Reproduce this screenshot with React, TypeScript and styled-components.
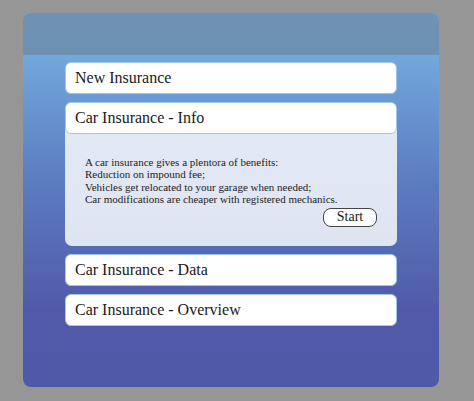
import React, { useState } from 'react';
import styled, { createGlobalStyle } from 'styled-components';

const GlobalStyle = createGlobalStyle`
  html, body {
    margin: 0;
    padding: 0;
    background: #969696;
  }
  body {
    font-family: "Liberation Serif", "Times New Roman", serif;
  }
`;

const Page = styled.div`
  padding: 13px 35px 14px 23px;
  height: 401px;
  box-sizing: border-box;
`;

const Frame = styled.div`
  width: 416px;
  height: 374px;
  border-radius: 8px;
  overflow: hidden;
  display: flex;
  flex-direction: column;
  background: linear-gradient(to bottom, #7ab6e6 0%, #5c7cc0 45%, #5159a8 80%, #5058a8 100%);
`;

const TopBand = styled.div`
  height: 42px;
  background: #6e92b4;
  flex-shrink: 0;
`;

const List = styled.div`
  display: flex;
  flex-direction: column;
  gap: 8px;
  padding: 7px 42px 0 42px;
`;

const Section = styled.div`
  display: flex;
  flex-direction: column;
`;

const Title = styled.button<{ $open: boolean }>`
  all: unset;
  box-sizing: border-box;
  height: 32px;
  padding: 0 9px;
  display: flex;
  align-items: center;
  background: #ffffff;
  border: 1px solid #9cc8ea;
  border-radius: 6px;
  font-family: "Liberation Serif", "Times New Roman", serif;
  font-size: 16px;
  color: #1a1a1a;
  cursor: pointer;
  position: relative;
  z-index: 1;
`;

const Panel = styled.div`
  margin-top: -6px;
  padding: 28px 20px 19px 20px;
  background: linear-gradient(to bottom, #e2eaf6 0%, #dfe4f1 100%);
  border-radius: 0 0 7px 7px;
  display: flex;
  flex-direction: column;
`;

const Body = styled.p`
  margin: 0;
  font-size: 11px;
  line-height: 12.4px;
  color: #1c1c1c;
`;

const StartButton = styled.button`
  align-self: flex-end;
  margin-top: 2px;
  width: 54px;
  height: 19px;
  border: 1px solid #444;
  border-radius: 8px;
  background: #fff;
  font-family: "Liberation Serif", "Times New Roman", serif;
  font-size: 14px;
  line-height: 1;
  color: #1a1a1a;
  padding: 0;
  cursor: pointer;
`;

const sections = [
  'New Insurance',
  'Car Insurance - Info',
  'Car Insurance - Data',
  'Car Insurance - Overview',
];

export default function App() {
  const [open, setOpen] = useState(1);
  return (
    <>
      <GlobalStyle />
      <Page>
        <Frame>
          <TopBand />
          <List>
            {sections.map((name, i) => (
              <Section key={name}>
                <Title $open={open === i} onClick={() => setOpen(i)}>
                  {name}
                </Title>
                {open === i && i === 1 && (
                  <Panel>
                    <Body>
                      A car insurance gives a plentora of benefits:
                      <br />
                      Reduction on impound fee;
                      <br />
                      Vehicles get relocated to your garage when needed;
                      <br />
                      Car modifications are cheaper with registered mechanics.
                    </Body>
                    <StartButton>Start</StartButton>
                  </Panel>
                )}
              </Section>
            ))}
          </List>
        </Frame>
      </Page>
    </>
  );
}
